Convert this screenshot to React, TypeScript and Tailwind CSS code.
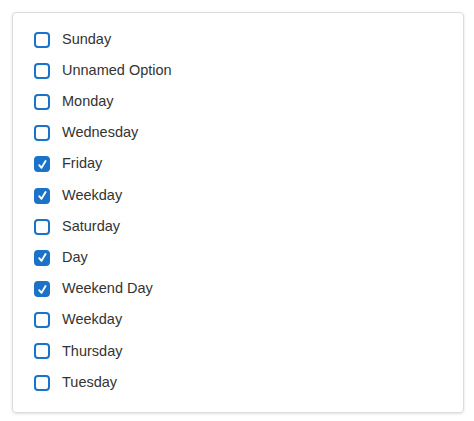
import React from 'react';

const OPTIONS: { label: string; checked: boolean }[] = [
  { label: 'Sunday', checked: false },
  { label: 'Unnamed Option', checked: false },
  { label: 'Monday', checked: false },
  { label: 'Wednesday', checked: false },
  { label: 'Friday', checked: true },
  { label: 'Weekday', checked: true },
  { label: 'Saturday', checked: false },
  { label: 'Day', checked: true },
  { label: 'Weekend Day', checked: true },
  { label: 'Weekday', checked: false },
  { label: 'Thursday', checked: false },
  { label: 'Tuesday', checked: false },
];

const Box: React.FC<{ checked: boolean }> = ({ checked }) => (
  <span
    className={`w-4 h-4 rounded-[4px] border-2 border-[#1a73c8] flex items-center justify-center shrink-0 ${
      checked ? 'bg-[#1a73c8]' : 'bg-white'
    }`}
  >
    {checked && (
      <svg width="11" height="11" viewBox="0 0 10 10" fill="none">
        <path d="M2 5.6 L4.1 8 L7.8 1.8" stroke="white" strokeWidth="1.7" strokeLinecap="round" strokeLinejoin="round" />
      </svg>
    )}
  </span>
);

export default function App() {
  return (
    <div className="w-[474px] h-[421px] bg-white pt-3 pl-3" style={{ fontFamily: '"Liberation Sans", Arial, sans-serif' }}>
      <div className="w-[452px] h-[401px] border border-[#dcdcdc] rounded-[4px] shadow-[0_1px_3px_rgba(0,0,0,0.12)] pl-[21px] pt-[11px]">
        {OPTIONS.map((o, i) => (
          <div key={i} className="h-[31.2px] flex items-center gap-3">
            <Box checked={o.checked} />
            <span className="text-[14.5px] text-[#333333]">{o.label}</span>
          </div>
        ))}
      </div>
    </div>
  );
}
